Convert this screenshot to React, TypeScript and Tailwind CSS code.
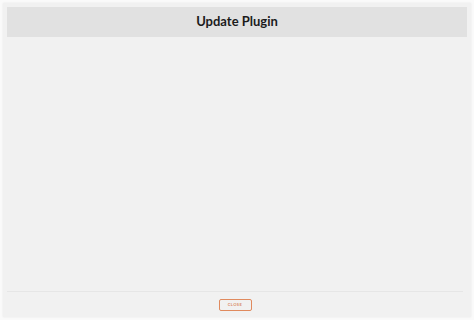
export default function App() {
  return (
    <div className="h-[320px] w-[474px] bg-[#fafafa] p-[3px] font-['Lato','Noto_Sans',sans-serif]">
      <div className="flex h-full flex-col bg-[#f1f1f1] px-1 pt-1 shadow-[0_0_2px_rgba(0,0,0,0.08)]">
        <div className="flex h-[30px] shrink-0 items-center justify-center bg-[#e1e1e1]">
          <h1 className="text-[13px] font-bold text-[#1b1b1b]">Update Plugin</h1>
        </div>
        <div className="flex-1" />
        <div className="mr-1 border-t border-[#e6e6e6]" />
        <div className="flex h-[25px] items-center justify-center pr-[4px]">
          <button className="flex h-[12px] w-[33px] items-center justify-center rounded-[2px] border border-[#e08a5e] text-[4px] font-bold tracking-[0.1em] text-[#d98a63]">
            CLOSE
          </button>
        </div>
      </div>
    </div>
  )
}
